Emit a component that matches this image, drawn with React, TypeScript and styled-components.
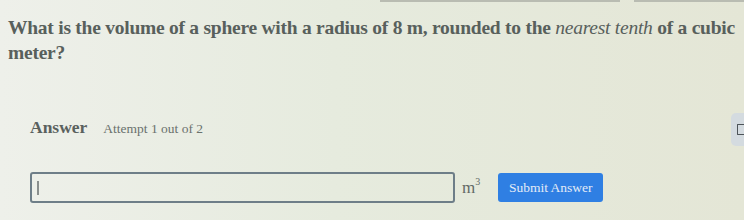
import React from 'react'
import styled, { createGlobalStyle } from 'styled-components'

const GlobalStyle = createGlobalStyle`
  html, body {
    margin: 0;
    padding: 0;
  }
  body {
    width: 744px;
    height: 220px;
    overflow: hidden;
    background: linear-gradient(90deg, #eef0ea 0%, #e6ebde 45%, #e4e6d6 100%);
    font-family: 'Liberation Serif', 'DejaVu Serif', serif;
    color: #575e5b;
  }
`

const Page = styled.div`
  position: relative;
  width: 744px;
  height: 220px;
`

const TopTabs = styled.div`
  display: flex;
  justify-content: flex-end;
  gap: 14px;
  height: 2px;
`

const TabLine = styled.div<{ $w: number }>`
  width: ${(p) => p.$w}px;
  height: 2px;
  background: #b9bcb2;
`

const Question = styled.p`
  margin: 13px 0 0 8px;
  width: 732px;
  font-size: 19.5px;
  line-height: 25px;
  font-weight: 700;
  color: #58605c;
  letter-spacing: -0.25px;

  em {
    font-weight: 400;
    font-style: italic;
  }
`

const AnswerHeader = styled.div`
  display: flex;
  align-items: baseline;
  gap: 16px;
  margin: 52px 0 0 30px;
`

const AnswerLabel = styled.span`
  font-size: 17.5px;
  font-weight: 700;
  color: #5a615e;
`

const Attempt = styled.span`
  font-size: 13.5px;
  color: #6a716d;
`

const SideButton = styled.div`
  position: absolute;
  right: 0;
  top: 113px;
  width: 13px;
  height: 33px;
  border-radius: 5px 0 0 5px;
  background: #d4dbe0;
  display: flex;
  align-items: center;
  justify-content: flex-end;
`

const SideIcon = styled.div`
  width: 7px;
  height: 11px;
  border: 1.5px solid #4d5459;
  border-right: none;
  border-radius: 1px 0 0 1px;
  box-sizing: border-box;
`

const InputRow = styled.div`
  display: flex;
  align-items: center;
  margin: 34px 0 0 30px;
`

const InputBox = styled.div`
  box-sizing: border-box;
  width: 425px;
  height: 31px;
  border: 2px solid #6e7e88;
  border-radius: 3px;
  display: flex;
  align-items: center;
  padding-left: 5px;
`

const Caret = styled.div`
  width: 1.5px;
  height: 14px;
  background: #8a8f8d;
`

const Unit = styled.span`
  margin-left: 7px;
  font-size: 17px;
  color: #626966;

  sup {
    font-size: 10px;
    vertical-align: 8px;
    line-height: 0;
  }
`

const SubmitButton = styled.button`
  margin-left: 18px;
  width: 105px;
  height: 29px;
  border: none;
  border-radius: 3px;
  background: #2f7fe3;
  color: #e3ebf6;
  font-family: 'Liberation Serif', 'DejaVu Serif', serif;
  font-size: 13.5px;
  padding: 0;
`

export default function App(): JSX.Element {
  return (
    <>
      <GlobalStyle />
      <Page>
        <TopTabs>
          <TabLine $w={240} />
          <TabLine $w={110} />
        </TopTabs>
        <Question>
          What is the volume of a sphere with a radius of 8 m, rounded to the{' '}
          <em>nearest tenth</em> of a cubic meter?
        </Question>
        <AnswerHeader>
          <AnswerLabel>Answer</AnswerLabel>
          <Attempt>Attempt 1 out of 2</Attempt>
        </AnswerHeader>
        <SideButton>
          <SideIcon />
        </SideButton>
        <InputRow>
          <InputBox>
            <Caret />
          </InputBox>
          <Unit>
            m<sup>3</sup>
          </Unit>
          <SubmitButton>Submit Answer</SubmitButton>
        </InputRow>
      </Page>
    </>
  )
}
